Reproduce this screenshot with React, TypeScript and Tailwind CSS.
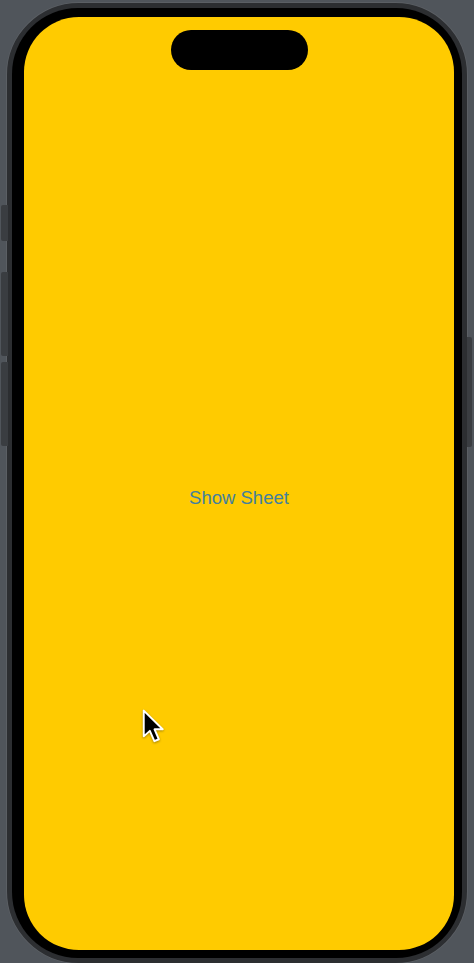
import React from "react";

function Cursor() {
  return (
    <svg
      width="26"
      height="37"
      viewBox="0 0 16 23"
      className="absolute left-[142px] top-[709px] drop-shadow-[0_1px_1px_rgba(0,0,0,0.35)]"
    >
      <path
        d="M1 1 L1 17 L4.8 13.6 L7.6 20 L10.4 18.8 L7.7 12.6 L12.8 12.6 Z"
        fill="#000"
        stroke="#fff"
        strokeWidth="1.2"
        strokeLinejoin="round"
      />
    </svg>
  );
}

export default function App() {
  return (
    <div
      className="relative w-[474px] h-[963px] bg-[#50555b] overflow-hidden"
      style={{ fontFamily: "'Liberation Sans', Arial, sans-serif" }}
    >
      {/* side buttons */}
      <div className="absolute left-[1px] top-[205px] w-[7px] h-[36px] rounded-l-[2px] bg-[#3a3d41]" />
      <div className="absolute left-[1px] top-[272px] w-[7px] h-[84px] rounded-l-[2px] bg-[#3a3d41]" />
      <div className="absolute left-[1px] top-[362px] w-[7px] h-[84px] rounded-l-[2px] bg-[#3a3d41]" />
      <div className="absolute left-[467px] top-[337px] w-[5px] h-[110px] rounded-r-[2px] bg-[#3a3d41]" />

      <div className="flex pl-[7px] pt-[3px]">
        <div className="flex rounded-[72px] bg-[#2c2e31] border-[5px] border-[#2c2e31] shadow-[0_0_0_1px_#5b5f64]">
          <div className="flex rounded-[66px] bg-black pl-[12px] pr-[8px] pt-[9px] pb-[8px]">
            <div className="w-[430px] h-[933px] rounded-[55px] bg-[#ffcb00] flex flex-col items-center">
              <div className="mt-[13px] w-[137px] h-[40px] rounded-full bg-black" />
              <div className="flex-1 flex items-center justify-center pb-[24px]">
                <span className="text-[18.5px] text-[#44809d]">Show Sheet</span>
              </div>
            </div>
          </div>
        </div>
      </div>
      <Cursor />
    </div>
  );
}
